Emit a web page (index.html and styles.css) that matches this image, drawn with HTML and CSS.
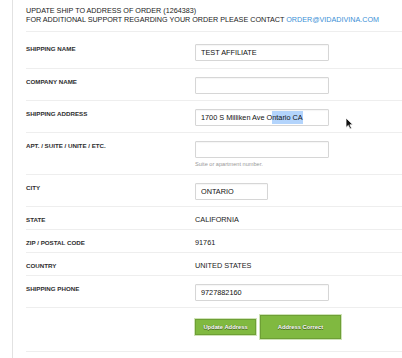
FILE: index.html
```html
<!DOCTYPE html>
<html lang="en">
<head>
    <meta charset="UTF-8">
    <meta name="viewport" content="width=device-width, initial-scale=1.0">
    <title>Update Ship To Address</title>
    <link rel="stylesheet" href="styles.css">
</head>
<body>
    <div class="page">
        <div class="intro">
            <p>UPDATE SHIP TO ADDRESS OF ORDER (1264383)</p>
            <p>FOR ADDITIONAL SUPPORT REGARDING YOUR ORDER PLEASE CONTACT <a href="#">ORDER@VIDADIVINA.COM</a></p>
        </div>

        <div class="form">
            <div class="row first">
                <label class="label" for="shipName">SHIPPING NAME</label>
                <div class="value"><input class="field" id="shipName" type="text" value="TEST AFFILIATE"></div>
            </div>
            <div class="row">
                <label class="label" for="company">COMPANY NAME</label>
                <div class="value"><input class="field" id="company" type="text" value=""></div>
            </div>
            <div class="row">
                <div class="label">SHIPPING ADDRESS</div>
                <div class="value">
                    <div class="field">1700 S Milliken Ave O<span class="selected">ntario CA</span></div>
                </div>
            </div>
            <div class="row">
                <label class="label" for="apt">APT. / SUITE / UNITE / ETC.</label>
                <div class="value">
                    <input class="field" id="apt" type="text" value="">
                    <div class="hint">Suite or apartment number.</div>
                </div>
            </div>
            <div class="row">
                <label class="label" for="city">CITY</label>
                <div class="value"><input class="field short" id="city" type="text" value="ONTARIO"></div>
            </div>
            <div class="row">
                <div class="label">STATE</div>
                <div class="value text">CALIFORNIA</div>
            </div>
            <div class="row">
                <div class="label">ZIP / POSTAL CODE</div>
                <div class="value text">91761</div>
            </div>
            <div class="row">
                <div class="label">COUNTRY</div>
                <div class="value text">UNITED STATES</div>
            </div>
            <div class="row">
                <label class="label" for="phone">SHIPPING PHONE</label>
                <div class="value"><input class="field" id="phone" type="text" value="9727882160"></div>
            </div>
            <div class="row actions">
                <div></div>
                <div class="value buttons">
                    <button class="btn">Update Address</button>
                    <button class="btn big">Address Correct</button>
                </div>
            </div>
        </div>
    </div>

    <!-- mouse pointer left over the page -->
    <svg class="pointer" width="9" height="13" viewBox="0 0 9 13">
        <path d="M1 1 L1 10.5 L3.3 8.4 L5 12 L6.6 11.3 L4.9 7.8 L8 7.8 Z" fill="#111" stroke="#fff" stroke-width="0.8"/>
    </svg>
</body>
</html>
```

FILE: styles.css
```css
body {
    margin: 0;
    background: #fff;
    font-family: "Liberation Sans", Arial, sans-serif;
    color: #333;
}

.page {
    margin-left: 12px;
    border-left: 1px solid #e2e2e2;
    padding-left: 13px;
    min-height: 358px;
}

.intro {
    padding: 7px 0 7px;
    border-bottom: 1px solid #eee;
    font-size: 7.2px;
    line-height: 8.5px;
    color: #1a1a1a;
}

.intro p {
    margin: 0;
}

.intro a {
    color: #3b8fd6;
    text-decoration: none;
}

.row {
    display: grid;
    grid-template-columns: 169px 1fr;
    align-items: start;
    padding: 8px 0 6px;
    border-bottom: 1px solid #eee;
}

.row.first {
    padding: 12px 0 7px;
}

.label {
    font-size: 6.2px;
    line-height: 7px;
    font-weight: 700;
    color: #2e2e2e;
    padding-top: 1px;
}

.value {
    font-size: 7.3px;
    color: #222;
}

.value.text {
    line-height: 7px;
    padding-top: 1px;
}

.field {
    display: block;
    box-sizing: border-box;
    width: 134px;
    height: 17px;
    margin: 0;
    padding: 0 5px;
    border: 1px solid #d6d6d6;
    border-radius: 1px;
    box-shadow: inset 0 1px 1px rgba(0, 0, 0, 0.04);
    background: #fff;
    font-family: "Liberation Sans", Arial, sans-serif;
    font-size: 7.3px;
    line-height: 15px;
    color: #111;
    outline: none;
}

.field.short {
    width: 73px;
}

.selected {
    background: #b3d4fc;
    padding: 2px 0;
}

.hint {
    margin-top: 2px;
    font-size: 5.6px;
    line-height: 8px;
    color: #999;
}

.row.actions {
    padding: 7px 0 12px;
}

.buttons {
    display: flex;
    align-items: center;
    gap: 4px;
}

.btn {
    background: #80b940;
    border: 1px solid #6e9f35;
    box-shadow: 0 0 0 1px #cfe3b8;
    color: #fff;
    font-family: "Liberation Sans", Arial, sans-serif;
    font-weight: 700;
    font-size: 5.8px;
    text-shadow: 0 0 1px #3d5a1c, 0 1px 0 #4a6b22;
    padding: 0;
    width: 61px;
    height: 16px;
    cursor: pointer;
}

.btn.big {
    width: 81px;
    height: 24px;
}

.pointer {
    position: absolute;
    left: 345px;
    top: 117px;
}
```
